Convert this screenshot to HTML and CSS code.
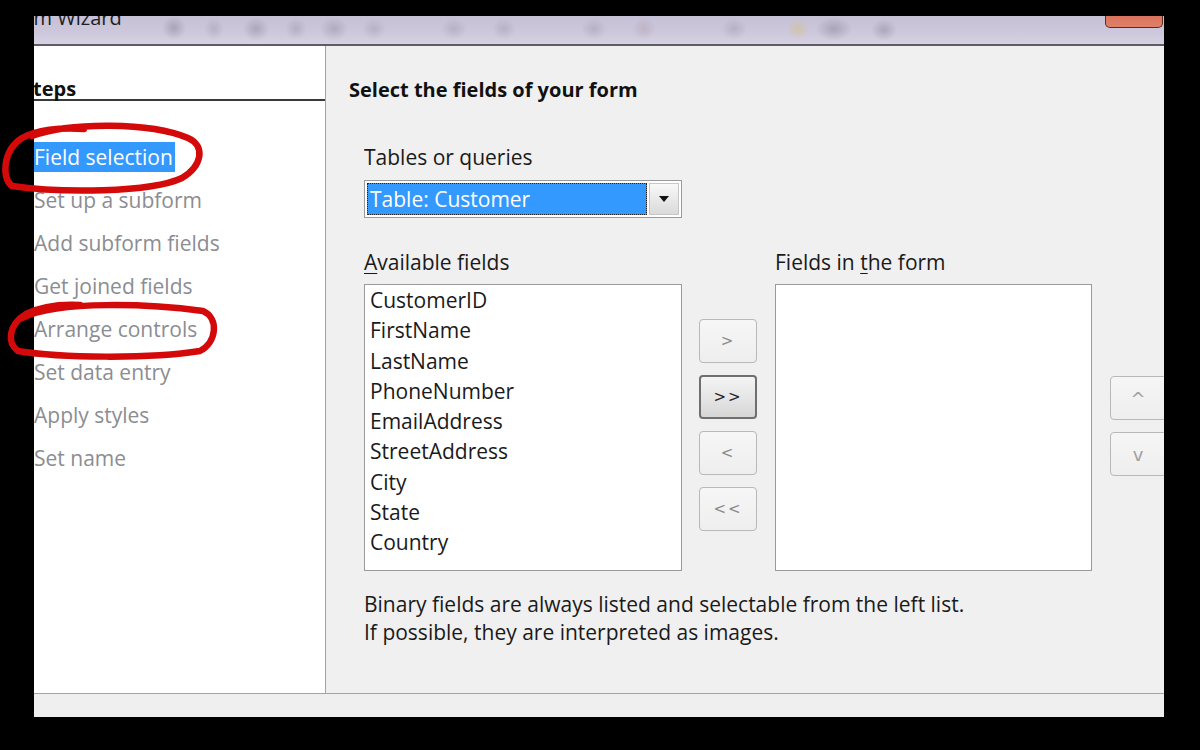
FILE: index.html
```html
<!DOCTYPE html>
<html>
<head>
<meta charset="utf-8">
<link rel="stylesheet" href="styles.css">
</head>
<body>
<div class="window">
  <div class="titlebar">
    <span class="title">Form Wizard</span>
    <span class="close"></span>
  </div>
  <div class="main">
    <aside class="steps">
      <h2 class="steps-head">Steps</h2>
      <ul class="step-list">
        <li class="step active"><span>Field selection</span></li>
        <li class="step"><span>Set up a subform</span></li>
        <li class="step"><span>Add subform fields</span></li>
        <li class="step"><span>Get joined fields</span></li>
        <li class="step"><span>Arrange controls</span></li>
        <li class="step"><span>Set data entry</span></li>
        <li class="step"><span>Apply styles</span></li>
        <li class="step"><span>Set name</span></li>
      </ul>
    </aside>
    <section class="page">
      <h1 class="page-title">Select the fields of your form</h1>
      <div class="form">
        <div class="lbl lbl-tables">Tables or queries</div>
        <div class="combo">
          <div class="combo-value">Table: Customer</div>
          <div class="combo-btn">
            <svg width="12" height="8" viewBox="0 0 12 8"><path d="M1 1 L11 1 L6 7 Z" fill="#111"/></svg>
          </div>
        </div>
        <div class="fields">
          <div class="col col-left">
            <div class="lbl"><u>A</u>vailable fields</div>
            <ul class="listbox">
              <li>CustomerID</li>
              <li>FirstName</li>
              <li>LastName</li>
              <li>PhoneNumber</li>
              <li>EmailAddress</li>
              <li>StreetAddress</li>
              <li>City</li>
              <li>State</li>
              <li>Country</li>
            </ul>
          </div>
          <div class="movebtns">
            <div class="btn">&gt;</div>
            <div class="btn btn-default">&gt;&gt;</div>
            <div class="btn">&lt;</div>
            <div class="btn">&lt;&lt;</div>
          </div>
          <div class="col col-right">
            <div class="lbl">Fields in <u>t</u>he form</div>
            <ul class="listbox"></ul>
          </div>
          <div class="orderbtns">
            <div class="btn btn-order">^</div>
            <div class="btn btn-order">v</div>
          </div>
        </div>
        <p class="note">Binary fields are always listed and selectable from the left list.<br>If possible, they are interpreted as images.</p>
      </div>
    </section>
  </div>
  <div class="footer"></div>
</div>
<svg class="annotations" width="1200" height="750" viewBox="0 0 1200 750">
  <path d="M 32 136 C 70 122, 150 122, 188 138 C 206 146, 202 166, 182 178 C 150 193, 60 193, 12 186 C 1 178, 3 150, 22 138 C 36 130, 60 127, 84 129" fill="none" stroke="#d40a0a" stroke-width="6.5" stroke-linecap="round" stroke-linejoin="round"/>
  <path d="M 22 318 C 60 300, 150 304, 203 311 C 219 318, 217 342, 200 351 C 150 359, 60 358, 18 351 C 7 343, 8 325, 26 314 C 40 307, 60 304, 80 305" fill="none" stroke="#d40a0a" stroke-width="6.5" stroke-linecap="round" stroke-linejoin="round"/>
</svg>
</body>
</html>
```
FILE: styles.css
```css
html, body {
  margin: 0;
  padding: 0;
}
body {
  background: #000;
  width: 1200px;
  height: 750px;
  overflow: hidden;
  position: relative;
  font-family: "Open Sans", "Noto Sans", sans-serif;
  color: #1a1a1a;
}
.window {
  margin: 16px 0 0 34px;
  width: 1130px;
  height: 701px;
  overflow: hidden;
  display: flex;
  flex-direction: column;
}
.titlebar {
  height: 28px;
  flex: none;
  border-bottom: 2px solid #5e5d66;
  display: flex;
  align-items: flex-start;
  overflow: hidden;
  background:
    radial-gradient(ellipse 12px 12px at 140px 12px, rgba(80,78,95,.28), transparent),
    radial-gradient(ellipse 10px 11px at 180px 13px, rgba(90,88,105,.18), transparent),
    radial-gradient(ellipse 13px 12px at 222px 13px, rgba(80,78,95,.25), transparent),
    radial-gradient(ellipse 11px 11px at 262px 13px, rgba(90,88,105,.2), transparent),
    radial-gradient(ellipse 14px 12px at 300px 13px, rgba(80,78,95,.22), transparent),
    radial-gradient(ellipse 12px 11px at 340px 13px, rgba(90,88,105,.18), transparent),
    radial-gradient(ellipse 13px 11px at 420px 13px, rgba(90,88,105,.18), transparent),
    radial-gradient(ellipse 12px 11px at 470px 13px, rgba(90,88,105,.18), transparent),
    radial-gradient(ellipse 13px 11px at 560px 13px, rgba(90,88,105,.18), transparent),
    radial-gradient(ellipse 12px 11px at 610px 13px, rgba(140,110,110,.2), transparent),
    radial-gradient(ellipse 13px 11px at 700px 13px, rgba(90,88,105,.18), transparent),
    radial-gradient(ellipse 11px 11px at 764px 13px, rgba(220,190,90,.35), transparent),
    radial-gradient(ellipse 18px 12px at 800px 13px, rgba(80,78,95,.28), transparent),
    radial-gradient(ellipse 13px 11px at 850px 14px, rgba(80,78,95,.25), transparent),
    linear-gradient(180deg, #c5c0d5 0%, #cdc8dc 60%, #d6d2e2 100%);
}
.title {
  font-size: 20px;
  line-height: 20px;
  margin: -8px 0 0 -31px;
  color: #1d1d24;
  white-space: nowrap;
}
.close {
  margin-left: auto;
  margin-right: 1px;
  width: 56px;
  height: 11px;
  border: 1px solid #5a2a22;
  border-top: none;
  border-radius: 0 0 5px 5px;
  background: linear-gradient(180deg, #d9745d, #e08068);
}
.main {
  display: flex;
  height: 647px;
  flex: none;
}
.steps {
  width: 291px;
  flex: none;
  background: #fff;
  border-right: 1px solid #a3a3a3;
}
.steps-head {
  margin: 33px 0 0 -12px;
  font-size: 20px;
  line-height: 20px;
  font-weight: 700;
  color: #111;
  border-bottom: 2px solid #3a3a3a;
}
.step-list {
  list-style: none;
  margin: 41px 0 0;
  padding: 0;
}
.step {
  height: 30px;
  line-height: 30px;
  margin-bottom: 13px;
  font-size: 21px;
  color: #8b8d92;
  white-space: nowrap;
}
.step span {
  display: inline-block;
  padding: 0 2px 0 0;
}
.step.active span {
  background: #3399ff;
  color: #fff;
}
.page {
  flex: 1;
  background: #f0f0f0;
  padding-left: 23px;
}
.page-title {
  margin: 30px 0 0;
  font-size: 20px;
  line-height: 28px;
  font-weight: 700;
  color: #111;
}
.form {
  padding-left: 15px;
}
.lbl {
  font-size: 21px;
  line-height: 28px;
  color: #1a1a1a;
  white-space: nowrap;
}
.lbl u {
  text-decoration-thickness: 1px;
  text-underline-offset: 3px;
}
.lbl-tables {
  margin-top: 39px;
}
.combo {
  margin-top: 9px;
  width: 318px;
  height: 38px;
  box-sizing: border-box;
  border: 1px solid #9a9a9a;
  background: #fff;
  display: flex;
  padding: 2px;
  gap: 2px;
}
.combo-value {
  flex: 1;
  background: #3399ff;
  color: #fff;
  border: 1px dotted #222;
  font-size: 21px;
  line-height: 30px;
  padding-left: 2px;
  white-space: nowrap;
}
.combo-btn {
  width: 28px;
  border: 1px solid #c6c6c6;
  background: linear-gradient(180deg, #f8f8f8, #dadada);
  display: flex;
  align-items: center;
  justify-content: center;
}
.fields {
  display: flex;
  margin-top: 30px;
}
.col-left {
  width: 318px;
}
.col-right {
  width: 317px;
}
.listbox {
  margin: 8px 0 0;
  height: 287px;
  box-sizing: border-box;
  border: 1px solid #9a9a9a;
  background: #fff;
  list-style: none;
  padding: 0 0 0 5px;
}
.listbox li {
  font-size: 21px;
  line-height: 30.25px;
  color: #1a1a1a;
}
.movebtns {
  margin: 71px 18px 0 17px;
  width: 58px;
  display: flex;
  flex-direction: column;
  gap: 12px;
}
.orderbtns {
  margin: 128px 0 0 18px;
  width: 58px;
  flex: none;
  display: flex;
  flex-direction: column;
  gap: 12px;
}
.btn {
  height: 44px;
  width: 58px;
  box-sizing: border-box;
  border: 1px solid #b8b8b8;
  border-radius: 4px;
  background: linear-gradient(180deg, #f6f6f6, #eeeeee);
  display: flex;
  align-items: center;
  justify-content: center;
  font-family: "DejaVu Sans", sans-serif;
  font-size: 15px;
  color: #8a8a8a;
  letter-spacing: 2px;
}
.btn-default {
  border: 2px solid #6f6f6f;
  background: linear-gradient(180deg, #f4f4f4 0%, #e6e6e6 50%, #d6d6d6 100%);
  color: #222;
}
.btn-order {
  font-size: 18px;
  color: #a0a0a0;
}
.note {
  margin: 19px 0 0;
  font-size: 21px;
  line-height: 28px;
  color: #1a1a1a;
  white-space: nowrap;
}
.footer {
  flex: none;
  height: 23px;
  border-top: 1px solid #a3a3a3;
  background: #efefef;
}
.annotations {
  position: absolute;
  left: 0;
  top: 0;
  pointer-events: none;
}
```
